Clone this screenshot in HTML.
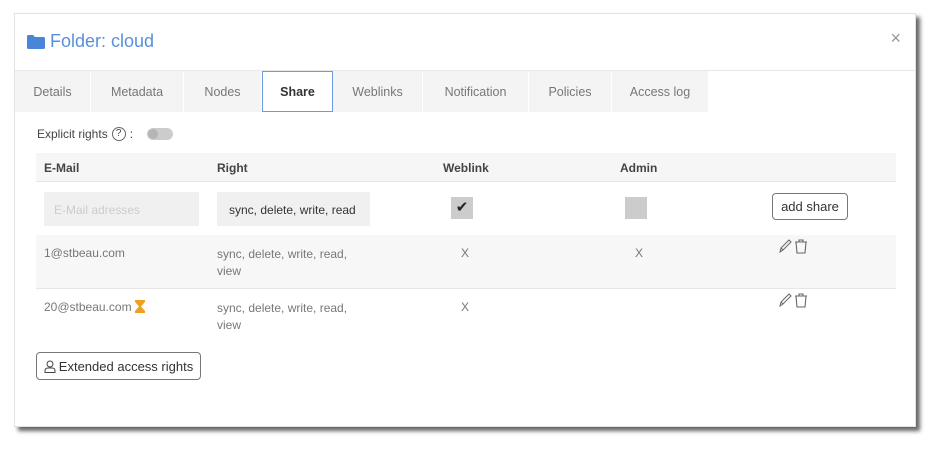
<!DOCTYPE html>
<html><head><meta charset="utf-8"><style>
*{box-sizing:border-box;margin:0;padding:0}
body{width:938px;height:449px;background:#fff;font-family:"Liberation Sans",sans-serif;position:relative;overflow:hidden;color:#555}
.dlg{position:absolute;left:14px;top:13px;width:902px;height:414px;background:#fff;border:1px solid #e2e2e2;box-shadow:4px 4px 4px rgba(0,0,0,.6)}
.abs{position:absolute}
.title{left:12px;top:17px;font-size:18px;color:#5a8fdc;display:flex;align-items:center;gap:5px}
.close{right:14px;top:14px;font-size:18px;color:#999}
.hsep{left:0;right:0;top:56px;border-top:1px solid #e8e8e8}
.tabs{left:0;top:57px;height:41px;display:flex}
.tab{height:41px;background:#f4f4f4;border-right:1px solid #fff;font-size:12.5px;color:#777;display:flex;align-items:center;justify-content:center}
.tab.act{background:#fff;border:1.5px solid #6a9be0;color:#333;font-weight:bold}
.small{font-size:12px}
.thead{left:21px;top:139px;width:860px;height:29px;background:#f6f6f6;border-bottom:1px solid #e6e6e6;font-size:12px;font-weight:bold;color:#444}
.thead span{position:absolute;top:8px}
.row{left:21px;width:860px;height:54px;font-size:12px;color:#777}
.row span{position:absolute}
.btn{border:1px solid #777;border-radius:4px;background:#fff;color:#333;font-size:13px;display:flex;align-items:center;justify-content:center}
</style></head><body>
<div class="dlg">
 <div class="abs title"><svg width="18" height="14" viewBox="0 0 18 14"><path d="M0 1.5Q0 0 1.5 0H6L8 2H16.5Q18 2 18 3.5V12.5Q18 14 16.5 14H1.5Q0 14 0 12.5Z" fill="#4a86d8"/></svg>Folder: cloud</div>
 <div class="abs close">×</div>
 <div class="abs hsep"></div>
 <div class="abs tabs">
  <div class="tab" style="width:76px">Details</div>
  <div class="tab" style="width:93px">Metadata</div>
  <div class="tab" style="width:78px">Nodes</div>
  <div class="tab act" style="width:71px">Share</div>
  <div class="tab" style="width:90px">Weblinks</div>
  <div class="tab" style="width:106px">Notification</div>
  <div class="tab" style="width:83px">Policies</div>
  <div class="tab" style="width:97px">Access log</div>
 </div>
 <div class="abs small" style="left:22px;top:113px;color:#444;display:flex;align-items:center;gap:4px">Explicit rights <span style="display:inline-block;width:14px;height:14px;border:1px solid #666;border-radius:50%;font-size:10px;text-align:center;line-height:12px">?</span> : <span style="display:inline-block;width:26px;height:12px;background:#ccc;border-radius:6px;margin-left:10px;position:relative"><span style="position:absolute;left:1px;top:1px;width:10px;height:10px;border-radius:50%;background:#b5b5b5"></span></span></div>
 <div class="abs thead"><span style="left:8px">E-Mail</span><span style="left:181px">Right</span><span style="left:407px">Weblink</span><span style="left:584px">Admin</span></div>
 <div class="abs row" style="top:168px;border-bottom:1px solid #e6e6e6">
  <div class="abs" style="left:8px;top:10px;width:155px;height:34px;background:#f0f0f0;color:#ccc;font-size:12px;padding:11px 10px">E-Mail adresses</div>
  <div class="abs" style="left:181px;top:10px;width:153px;height:34px;background:#f0f0f0;color:#333;font-size:12px;padding:11px 12px;white-space:nowrap;overflow:hidden">sync, delete, write, read</div>
  <div class="abs" style="left:415px;top:15px;width:22px;height:22px;background:#ccc;color:#222;font-size:15px;text-align:center;line-height:22px">✔</div>
  <div class="abs" style="left:589px;top:15px;width:22px;height:22px;background:#ccc"></div>
  <div class="abs btn" style="left:736px;top:11px;width:76px;height:27px">add share</div>
 </div>
 <div class="abs row" style="top:221px;background:#f7f7f7;border-bottom:1px solid #e6e6e6">
  <span style="left:8px;top:11px">1@stbeau.com</span>
  <span style="left:181px;top:11px;line-height:17px">sync, delete, write, read,<br>view</span>
  <span style="left:425px;top:11px">X</span><span style="left:599px;top:11px">X</span>
  <svg class="abs" style="left:742px;top:3px" width="32" height="16" viewBox="0 0 32 16"><path d="M2 14L3 10L11 2L13 4L5 12Z M3 10L5 12" fill="none" stroke="#666" stroke-width="1"/><path d="M17 4H29M21 4V2H25V4M18 4L19 15H27L28 4" fill="none" stroke="#666" stroke-width="1.1"/></svg>
 </div>
 <div class="abs row" style="top:275px">
  <span style="left:8px;top:11px">20@stbeau.com <svg style="vertical-align:-2px" width="10" height="13" viewBox="0 0 10 13"><path d="M0 0H10V2L6 6.5L10 11V13H0V11L4 6.5L0 2Z" fill="#f0a020"/></svg></span>
  <span style="left:181px;top:11px;line-height:17px">sync, delete, write, read,<br>view</span>
  <span style="left:425px;top:11px">X</span>
  <svg class="abs" style="left:742px;top:3px" width="32" height="16" viewBox="0 0 32 16"><path d="M2 14L3 10L11 2L13 4L5 12Z M3 10L5 12" fill="none" stroke="#666" stroke-width="1"/><path d="M17 4H29M21 4V2H25V4M18 4L19 15H27L28 4" fill="none" stroke="#666" stroke-width="1.1"/></svg>
 </div>
 <div class="abs btn" style="left:21px;top:338px;width:165px;height:28px;gap:3px"><svg width="12" height="13" viewBox="0 0 12 13"><circle cx="6" cy="4" r="3" fill="none" stroke="#444"/><path d="M1 12.5V11Q1 8 4 8H8Q11 8 11 11V12.5Z" fill="none" stroke="#444"/></svg>Extended access rights</div>
</div>
</body></html>
